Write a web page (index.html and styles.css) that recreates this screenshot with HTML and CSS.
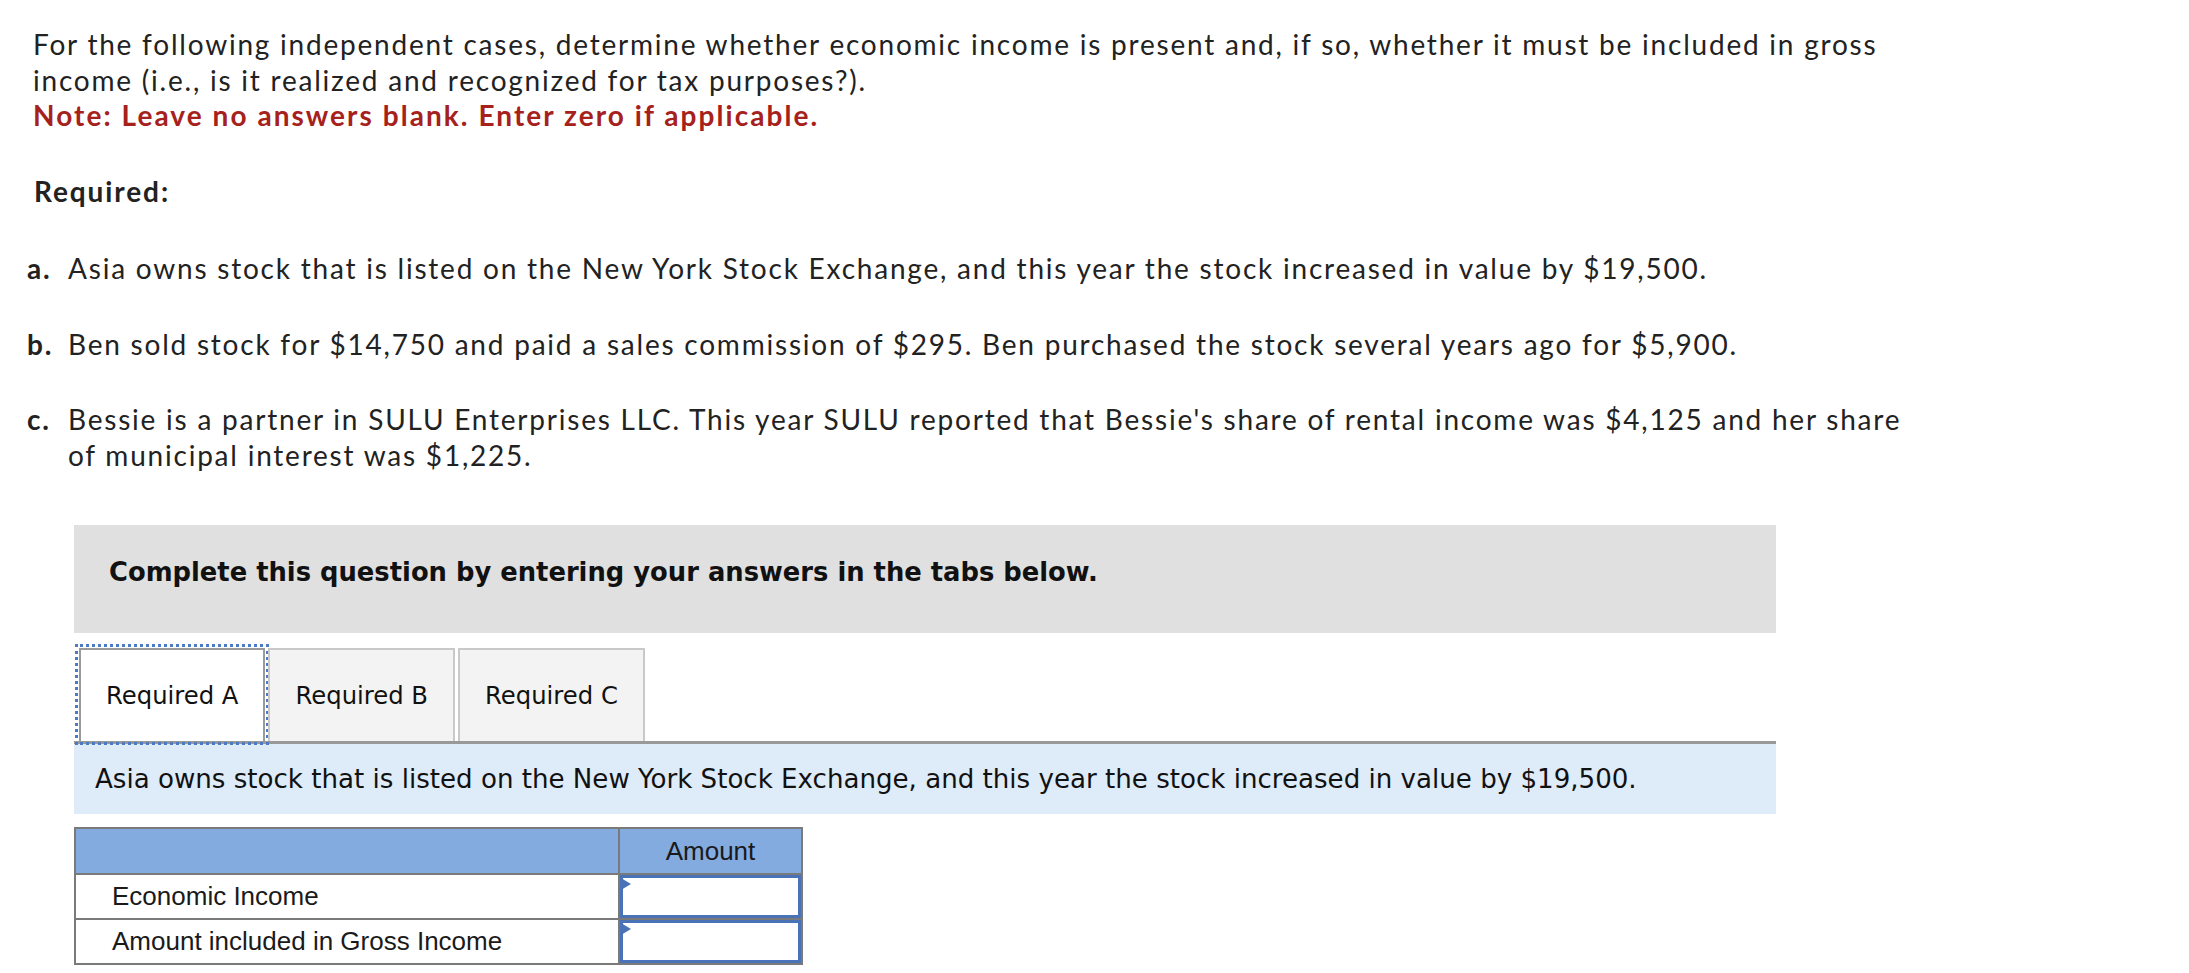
FILE: index.html
```html
<!DOCTYPE html>
<html lang="en">
<head>
<meta charset="utf-8">
<title>Question</title>
<link rel="stylesheet" href="styles.css">
</head>
<body>
<div class="page">
  <div class="intro">
    <p class="intro-text">For the following independent cases, determine whether economic income is present and, if so, whether it must be included in gross income (i.e., is it realized and recognized for tax purposes?).</p>
    <p class="note">Note: Leave no answers blank. Enter zero if applicable.</p>
  </div>

  <p class="required">Required:</p>

  <ol class="cases">
    <li class="case"><span class="case-label">a.</span><span class="case-text">Asia owns stock that is listed on the New York Stock Exchange, and this year the stock increased in value by $19,500.</span></li>
    <li class="case"><span class="case-label">b.</span><span class="case-text">Ben sold stock for $14,750 and paid a sales commission of $295. Ben purchased the stock several years ago for $5,900.</span></li>
    <li class="case"><span class="case-label">c.</span><span class="case-text">Bessie is a partner in SULU Enterprises LLC. This year SULU reported that Bessie's share of rental income was $4,125 and her share of municipal interest was $1,225.</span></li>
  </ol>

  <div class="work">
    <div class="instructions">Complete this question by entering your answers in the tabs below.</div>

    <div class="tabs">
      <div class="tab tab-active">Required A</div>
      <div class="tab">Required B</div>
      <div class="tab">Required C</div>
    </div>

    <div class="prompt">Asia owns stock that is listed on the New York Stock Exchange, and this year the stock increased in value by $19,500.</div>

    <table class="answer">
      <thead>
        <tr>
          <th class="col-label"></th>
          <th class="col-amount">Amount</th>
        </tr>
      </thead>
      <tbody>
        <tr>
          <td class="row-label">Economic Income</td>
          <td class="cell-input"><div class="input-box"><span class="marker"></span></div></td>
        </tr>
        <tr>
          <td class="row-label">Amount included in Gross Income</td>
          <td class="cell-input"><div class="input-box"><span class="marker"></span></div></td>
        </tr>
      </tbody>
    </table>
  </div>
</div>
</body>
</html>
```

FILE: styles.css
```css
html, body {
  margin: 0;
  padding: 0;
  background: #ffffff;
}

.page {
  padding-top: 27px;
  font-family: Lato, "Open Sans", sans-serif;
  color: #222222;
}

.intro {
  margin-left: 33px;
  width: 1890px;
}

.intro-text,
.note {
  margin: 0;
  font-size: 28px;
  line-height: 35.5px;
  letter-spacing: 1.78px;
}

.note {
  color: #a6211c;
  font-weight: 700;
  letter-spacing: 2.05px;
}

.required {
  margin: 40px 0 0 34px;
  font-size: 28px;
  line-height: 35.5px;
  font-weight: 700;
  letter-spacing: 1.9px;
}

.cases {
  list-style: none;
  margin: 42px 0 0 0;
  padding: 0;
  display: flex;
  flex-direction: column;
  gap: 40px;
}

.case {
  display: grid;
  grid-template-columns: 41px 1856px;
  margin-left: 27px;
  font-size: 28px;
  line-height: 35.5px;
  letter-spacing: 1.78px;
}

.case-label {
  font-weight: 700;
}

.work {
  margin: 52px 0 0 74px;
  width: 1702px;
}

.instructions {
  box-sizing: border-box;
  height: 108px;
  padding: 32px 35px 0;
  background: #e0e0e0;
  font-family: "DejaVu Sans", Verdana, sans-serif;
  font-weight: 700;
  font-size: 25.8px;
  color: #111111;
}

.tabs {
  display: flex;
  gap: 3px;
  margin-top: 15px;
  padding-left: 5px;
  border-bottom: 3px solid #999999;
}

.tab {
  box-sizing: border-box;
  height: 93px;
  padding: 0 25px;
  display: flex;
  align-items: center;
  background: #f3f3f3;
  border: 2px solid #c9c9c9;
  border-bottom: none;
  font-family: "DejaVu Sans", Verdana, sans-serif;
  font-size: 24.3px;
  color: #111111;
}

.tab-active {
  background: #ffffff;
  border-color: #9a9a9a;
  outline: 3px dotted #4a7bc4;
  outline-offset: 1px;
}

.prompt {
  box-sizing: border-box;
  height: 70px;
  padding: 20px 21px 0;
  background: #deebf8;
  font-family: "DejaVu Sans", Verdana, sans-serif;
  font-size: 26.1px;
  color: #111111;
}

.answer {
  margin-top: 13px;
  border-collapse: collapse;
  font-family: "Liberation Sans", Arial, sans-serif;
  font-size: 26px;
  color: #1a1a1a;
}

.answer th,
.answer td {
  border: 2px solid #7a7a7a;
  padding: 0;
}

.answer th {
  height: 44px;
  background: #84abe0;
  font-weight: 400;
}

.col-label {
  width: 542px;
}

.col-amount {
  width: 181px;
  text-align: center;
}

.row-label {
  height: 43px;
  padding-left: 36px !important;
  text-align: left;
}

.cell-input {
  height: 43px;
}

.input-box {
  position: relative;
  box-sizing: border-box;
  height: 43px;
  border: 3px solid #4a72b6;
  background: #ffffff;
}

.marker {
  position: absolute;
  top: 0;
  left: -2px;
  width: 0;
  height: 0;
  border-top: 6px solid transparent;
  border-bottom: 6px solid transparent;
  border-left: 10px solid #4a72b6;
}
```
